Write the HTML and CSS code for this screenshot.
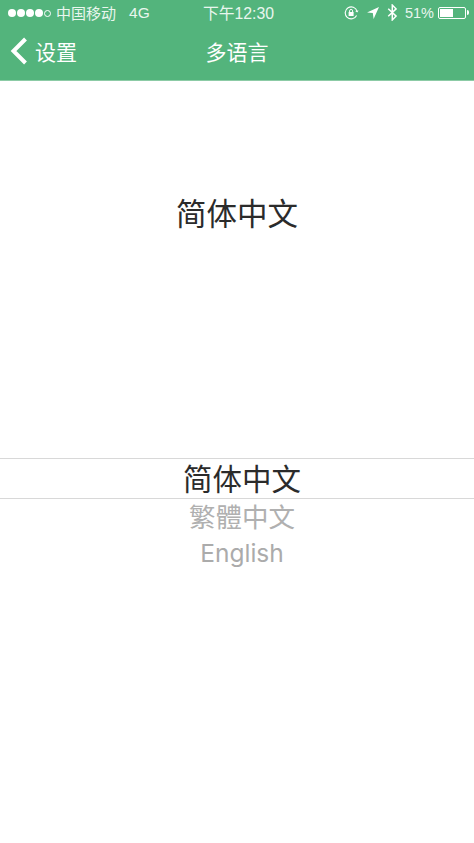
FILE: index.html
```html
<!DOCTYPE HTML>
<html>

<head>
	<meta http-equiv="Content-Type" content="text/html; charset=utf-8">
	<title>多语言</title>
	<link rel="stylesheet" href="styles.css">
</head>

<body>
	<div class="header">
		<div class="status">
			<div class="status-left">
				<span class="dots"><i></i><i></i><i></i><i></i><i class="off"></i></span>
				<span class="carrier">中国移动</span>
				<span class="net">4G</span>
			</div>
			<div class="status-time">下午12:30</div>
			<div class="status-right">
				<svg class="ico-lock" width="15" height="14" viewBox="0 0 15 14">
					<path d="M12.6 9.6A6 6 0 1 1 13 5.2" fill="none" stroke="#fff" stroke-width="1.1"/>
					<path d="M11.2 5l2 1.6L14.6 4.6z" fill="#fff"/>
					<rect x="4.6" y="6" width="5" height="4" fill="#fff"/>
					<path d="M5.6 6V4.9a1.5 1.5 0 0 1 3 0V6" fill="none" stroke="#fff" stroke-width="1"/>
				</svg>
				<svg class="ico-loc" width="12" height="12" viewBox="0 0 12 12">
					<path d="M12 0L0 5.4l5.8.6.8 6z" fill="#fff"/>
				</svg>
				<svg class="ico-bt" width="11" height="17" viewBox="0 0 10 16">
					<path d="M1 4.4l7.4 7L4.8 15V1l3.6 3.6L1 11.6" fill="none" stroke="#fff" stroke-width="1.4"/>
				</svg>
				<span class="pct">51%</span>
				<span class="battery"><span class="battery-fill"></span></span>
				<span class="battery-tip"></span>
			</div>
		</div>
		<div class="nav">
			<div class="back">
				<svg width="18" height="28" viewBox="0 0 18 28">
					<path d="M15.5 2L3.5 14l12 12" fill="none" stroke="#fff" stroke-width="4"/>
				</svg>
				<span>设置</span>
			</div>
			<div class="nav-title">多语言</div>
		</div>
	</div>

	<div class="current">简体中文</div>

	<ul class="picker">
		<li class="selected">简体中文</li>
		<li class="second">繁體中文</li>
		<li class="third">English</li>
	</ul>
</body>

</html>
```
FILE: styles.css
```css
* {
	box-sizing: border-box;
}

body {
	margin: 0;
	background: #fff;
	font-family: "Liberation Sans", "Noto Sans CJK SC", sans-serif;
	color: #2b2b2b;
}

ul {
	margin: 0;
	padding: 0;
}

li {
	list-style: none;
}

.header {
	height: 81px;
	background: #53b47c;
	border-bottom: 1px solid #8ccba6;
	color: #fff;
}

.status {
	height: 25px;
	padding: 0 5px 0 8px;
	display: grid;
	grid-template-columns: 1fr auto 1fr;
	align-items: center;
	font-size: 15px;
	color: #e9f6ee;
}

.status-left {
	display: flex;
	align-items: center;
}

.dots {
	display: flex;
	gap: 1px;
	margin-right: 5px;
}

.dots i {
	width: 8px;
	height: 8px;
	border-radius: 50%;
	background: #fff;
}

.dots .off {
	width: 7px;
	height: 7px;
	margin-top: 1px;
	background: none;
	border: 1px solid #fff;
}

.net {
	margin-left: 13px;
	font-size: 15.5px;
}

.status-time {
	font-size: 15.8px;
}

.status-right {
	display: flex;
	align-items: center;
	justify-content: flex-end;
	font-size: 14.5px;
}

.ico-loc {
	margin-left: 8px;
}

.ico-bt {
	margin-left: 8px;
}

.pct {
	margin-left: 7px;
}

.battery {
	margin-left: 4px;
	width: 28px;
	height: 12px;
	border: 1px solid #fff;
	border-radius: 2px;
	padding: 1px;
}

.battery-fill {
	display: block;
	width: 54%;
	height: 100%;
	background: #fff;
}

.battery-tip {
	width: 2px;
	height: 5px;
	margin-left: 1px;
	background: #fff;
	border-radius: 0 2px 2px 0;
}

.nav {
	height: 55px;
	padding: 0 10px 3px;
	display: grid;
	grid-template-columns: 1fr auto 1fr;
	align-items: center;
}

.back {
	display: flex;
	align-items: center;
	gap: 7px;
	font-size: 21px;
}

.nav-title {
	font-size: 21px;
	padding-bottom: 1px;
}

.current {
	margin-top: 113px;
	height: 40px;
	line-height: 40px;
	text-align: center;
	font-size: 30.5px;
}

.picker {
	margin-top: 224px;
	border-top: 1px solid #d8d8d8;
	text-align: center;
	padding-left: 10px;
}

.selected {
	height: 40px;
	line-height: 41px;
	font-size: 29.5px;
	margin-left: -10px;
	padding-left: 10px;
	border-bottom: 1px solid #d8d8d8;
}

.second {
	height: 36px;
	line-height: 38px;
	font-size: 26.5px;
	color: #b0b0b0;
}

.third {
	height: 36px;
	line-height: 36px;
	font-family: Inter, "Liberation Sans", sans-serif;
	font-size: 24.5px;
	color: #ababab;
}
```
